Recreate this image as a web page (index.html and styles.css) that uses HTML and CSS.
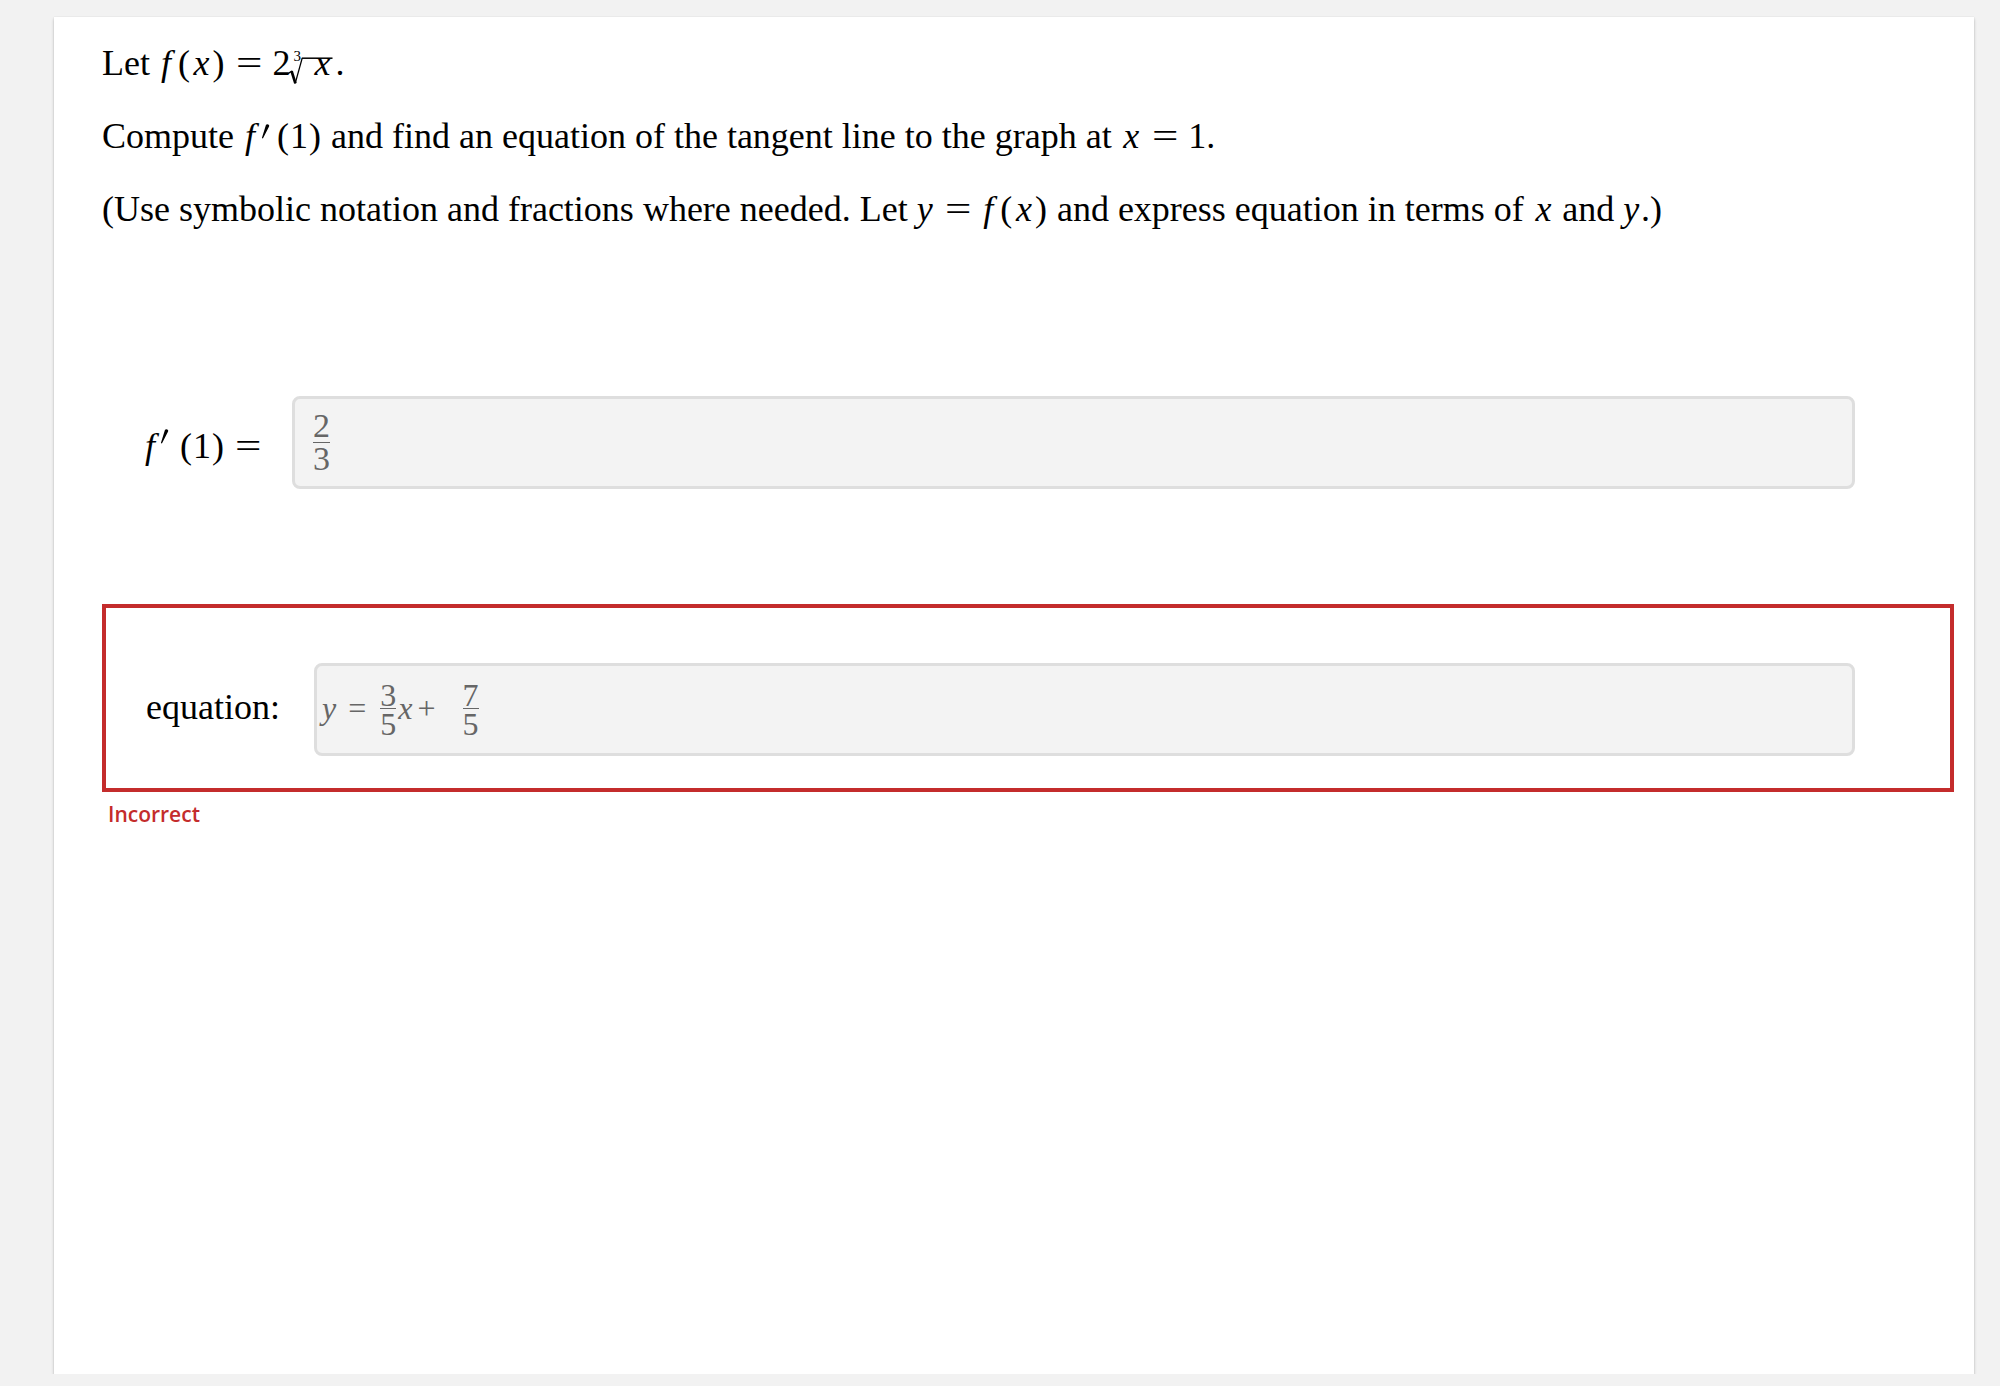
FILE: index.html
```html
<!DOCTYPE html>
<html lang="en">
<head>
<meta charset="utf-8">
<title>Tangent line question</title>
<link rel="stylesheet" href="styles.css">
</head>
<body>
<div class="card">
  <div class="content">
    <p class="q">Let <i class="mi mi-f">f</i><span class="mp">(</span><i class="mi mi-x">x</i><span class="mp">)</span><span class="op">=</span>2<span class="root"><svg class="root-sign" width="46" height="28" viewBox="0 0 46 28"><path d="M0.4 16.4 L3.6 14.2" stroke="#000" stroke-width="1.3" fill="none" stroke-linecap="round"/><path d="M3.6 14.2 L7.4 26.4" stroke="#000" stroke-width="2.7" fill="none"/><path d="M7.2 26.4 L14.2 1.2" stroke="#000" stroke-width="1.3" fill="none"/><path d="M13.8 1.2 L44.5 1.2" stroke="#000" stroke-width="1.5" fill="none"/></svg><span class="root-idx">3</span><i class="mi mi-x">x</i></span>.</p>
    <p class="q">Compute <i class="mi mi-f">f</i><svg class="prime" width="9" height="15" viewBox="0 0 9 15"><path d="M5 0.7 Q6.9 -0.3 8.1 1.2 Q8.4 2.3 7.7 3.2 L1.9 14.5 L0.9 14.1 Z" fill="#000"/></svg><span class="mp">(</span>1<span class="mp">)</span> and find an equation of the tangent line to the graph at <i class="mi mi-x">x</i><span class="op">=</span>1.</p>
    <p class="q">(Use symbolic notation and fractions where needed. Let <i class="mi mi-y">y</i><span class="op">=</span><i class="mi mi-f">f</i><span class="mp">(</span><i class="mi mi-x">x</i><span class="mp">)</span> and express equation in terms of <i class="mi mi-x">x</i> and <i class="mi mi-y">y</i>.)</p>

    <div class="answer-row">
      <div class="label label-math"><i class="mi mi-f">f</i><svg class="prime prime-label" width="9" height="15" viewBox="0 0 9 15"><path d="M5 0.7 Q6.9 -0.3 8.1 1.2 Q8.4 2.3 7.7 3.2 L1.9 14.5 L0.9 14.1 Z" fill="#000"/></svg><span class="mp">(</span>1<span class="mp">)</span><span class="op op-label">=</span></div>
      <div class="box box-frac">
        <span class="frac frac-lg"><span class="num">2</span><span class="bar"></span><span class="den">3</span></span>
      </div>
    </div>

    <div class="answer-row incorrect">
      <div class="label label-text">equation:</div>
      <div class="box box-eq">
        <span class="eq"><i class="mi">y</i><span class="eq-op">=</span><span class="frac frac-sm"><span class="num">3</span><span class="bar"></span><span class="den">5</span></span><i class="mi eq-x">x</i><span class="eq-plus">+</span><span class="frac frac-sm"><span class="num">7</span><span class="bar"></span><span class="den">5</span></span></span>
      </div>
    </div>
    <div class="feedback">Incorrect</div>
  </div>
</div>
</body>
</html>
```

FILE: styles.css
```css
html, body {
  margin: 0;
  padding: 0;
  background: #f2f2f2;
}

body {
  font-family: "Liberation Serif", "Times New Roman", serif;
  color: #000;
}

.card {
  margin: 17px 26px 0 54px;
  height: 1357px;
  background: #fff;
  box-shadow: 0 2px 3px rgba(0, 0, 0, 0.22), 0 0 1px rgba(0, 0, 0, 0.12);
  overflow: hidden;
}

.content {
  padding: 25px 20px 0 48px;
}

.q {
  margin: 0 0 30px 0;
  font-size: 36px;
  line-height: 43px;
  white-space: nowrap;
}

/* math identifiers, widened to the metrics of a TeX math font */
.mi {
  font-style: italic;
}

.mi-f {
  padding: 0 6px 0 2px;
}

.mi-x {
  padding: 0 2px 0 2.6px;
}

.mi-y {
  padding: 0 1.7px 0 0;
}

.mp {
  padding: 0 1px;
}

.op {
  display: inline-block;
  margin: 0 13.3px;
  transform: scaleX(1.3);
}

.prime {
  vertical-align: 9px;
  margin: 0 6px 0 0;
}

.prime-label {
  vertical-align: 14px;
  margin: 0 10px 0 -1px;
}

.root {
  display: inline-block;
  position: relative;
  padding: 0 3px 0 21.4px;
}

.root-sign {
  position: absolute;
  left: -2px;
  top: 14.5px;
}

.root-idx {
  position: absolute;
  left: 3px;
  top: 7px;
  font-size: 15px;
  line-height: 15px;
}

.answer-row {
  display: flex;
  align-items: flex-start;
  border: 4px solid transparent;
  padding: 55px 95px 32px 40px;
}

.q + .answer-row {
  margin-top: 106px;
}

.answer-row + .answer-row {
  margin-top: 79px;
}

.answer-row.incorrect {
  border-color: #c42c2c;
}

.label {
  font-size: 36px;
  line-height: 43px;
  white-space: nowrap;
}

.label-math {
  flex: 0 0 149px;
  margin-top: 29px;
  margin-left: -3px;
}

.op-label {
  margin: 0 0 0 13px;
}

.label-text {
  flex: 0 0 168px;
  margin-top: 23px;
}

.box {
  flex: 1;
  height: 87px;
  border: 3px solid #dedede;
  border-radius: 8px;
  background: #f3f3f3;
  display: flex;
  align-items: center;
  color: #666;
}

.box-frac {
  padding-left: 17px;
}

.box-eq {
  padding-left: 5px;
}

.frac {
  display: inline-flex;
  flex-direction: column;
  align-items: center;
  padding: 0 1px;
}

.frac .bar {
  align-self: stretch;
  height: 1.5px;
  background: #666;
}

.frac-lg {
  font-size: 34px;
}

.frac-lg .num {
  line-height: 26px;
  margin-bottom: 3px;
}

.frac-lg .den {
  line-height: 26px;
  margin-top: 3px;
}

.eq {
  font-size: 32px;
  line-height: 40px;
  white-space: nowrap;
}

.frac-sm {
  vertical-align: 13px;
}

.frac-sm .num {
  line-height: 24px;
  margin-bottom: 1px;
}

.frac-sm .den {
  line-height: 24px;
  margin-top: 3px;
}

.eq-op {
  margin: 0 13px 0 12px;
}

.eq-x {
  margin-left: 1px;
}

.eq-plus {
  margin: 0 26px 0 5px;
}

.feedback {
  margin-top: 10px;
  padding-left: 6px;
  font-family: "Open Sans", "Noto Sans", sans-serif;
  font-weight: 600;
  font-size: 21px;
  line-height: 25px;
  color: #c42c2c;
}
```
